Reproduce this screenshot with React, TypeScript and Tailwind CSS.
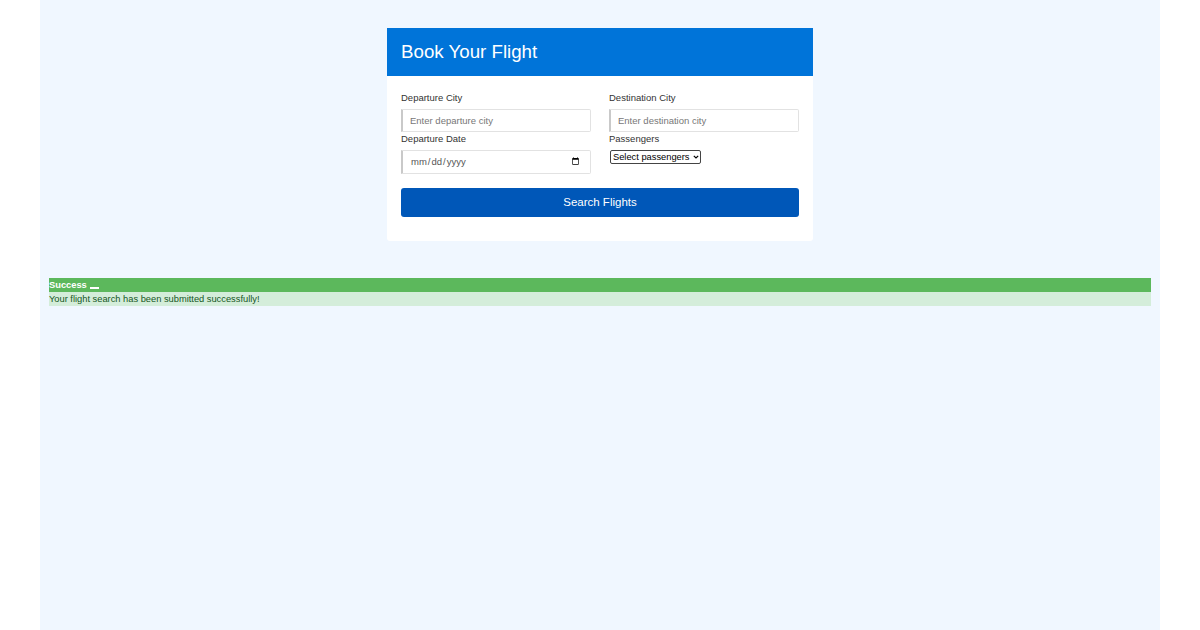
import React, { useState } from 'react';

const font = "font-['Liberation_Sans',Arial,sans-serif]";

const Field: React.FC<{ label: string; children: React.ReactNode }> = ({ label, children }) => (
    <div className="flex flex-col items-start">
        <label className="text-[9.5px] leading-[14px] text-[#333] mb-[4px]">{label}</label>
        {children}
    </div>
);

const inputClass =
    "w-full h-[23px] pl-[7px] pr-[8px] text-[9.5px] text-[#333] bg-white border border-[#e2e2e2] border-l-2 border-l-[#c9c9c9] rounded-r-[2px] outline-none placeholder:text-[#777]";

export default function App() {
    const [passengers, setPassengers] = useState('');

    return (
        <div className={`min-h-[630px] bg-white ${font}`}>
            <div className="max-w-[1120px] min-h-[630px] mx-auto bg-[#f0f7ff] px-[9px] pt-[28px]">
                <section className="w-[426px] mx-auto bg-white rounded-b-[3px]">
                    <header className="h-[48px] bg-[#0074d9] px-[14px] flex items-center">
                        <h3 className="text-[18.72px] text-white leading-none">Book Your Flight</h3>
                    </header>

                    <form className="px-[14px] pt-[15px] pb-[24px]" onSubmit={(e) => e.preventDefault()}>
                        <div className="grid grid-cols-2 gap-x-[18px]">
                            <Field label="Departure City">
                                <input className={inputClass} placeholder="Enter departure city" />
                            </Field>
                            <Field label="Destination City">
                                <input className={inputClass} placeholder="Enter destination city" />
                            </Field>
                            <Field label="Departure Date">
                                <input type="date" className={`${inputClass} h-[24px] text-[#555]`} />
                            </Field>
                            <Field label="Passengers">
                                <div className="relative flex ml-[1px]">
                                    <select
                                        value={passengers}
                                        onChange={(e) => setPassengers(e.target.value)}
                                        className="block appearance-none h-[14px] w-[91px] pl-[2px] pr-[10px] text-[9.3px] leading-[12px] text-black bg-white border border-[#444] rounded-[2px]"
                                    >
                                        <option value="">Select passengers</option>
                                        <option value="1">1</option>
                                        <option value="2">2</option>
                                        <option value="3">3</option>
                                        <option value="4">4</option>
                                    </select>
                                    <svg
                                        className="absolute right-[2px] top-[5px] pointer-events-none"
                                        width="6"
                                        height="4"
                                        viewBox="0 0 6 4"
                                        fill="none"
                                    >
                                        <path d="M0.8 0.8 L3 3 L5.2 0.8" stroke="#000" strokeWidth="1.2" />
                                    </svg>
                                </div>
                            </Field>
                        </div>

                        <button
                            type="submit"
                            className="mt-[14px] w-full h-[29px] rounded-[3px] bg-[#0057b8] text-white text-[11.5px]"
                        >
                            Search Flights
                        </button>
                    </form>
                </section>

                <div className="mt-[37px] text-[9.3px] leading-[14px]">
                    <div className="bg-[#5cb85c] text-white font-bold flex items-center">
                        <span>Success</span>
                        <span className="ml-[3px] mt-[6px] w-[9px] h-[2px] bg-white" />
                    </div>
                    <div className="bg-[#d4edda] text-[#155724]">
                        Your flight search has been submitted successfully!
                    </div>
                </div>
            </div>
        </div>
    );
}
